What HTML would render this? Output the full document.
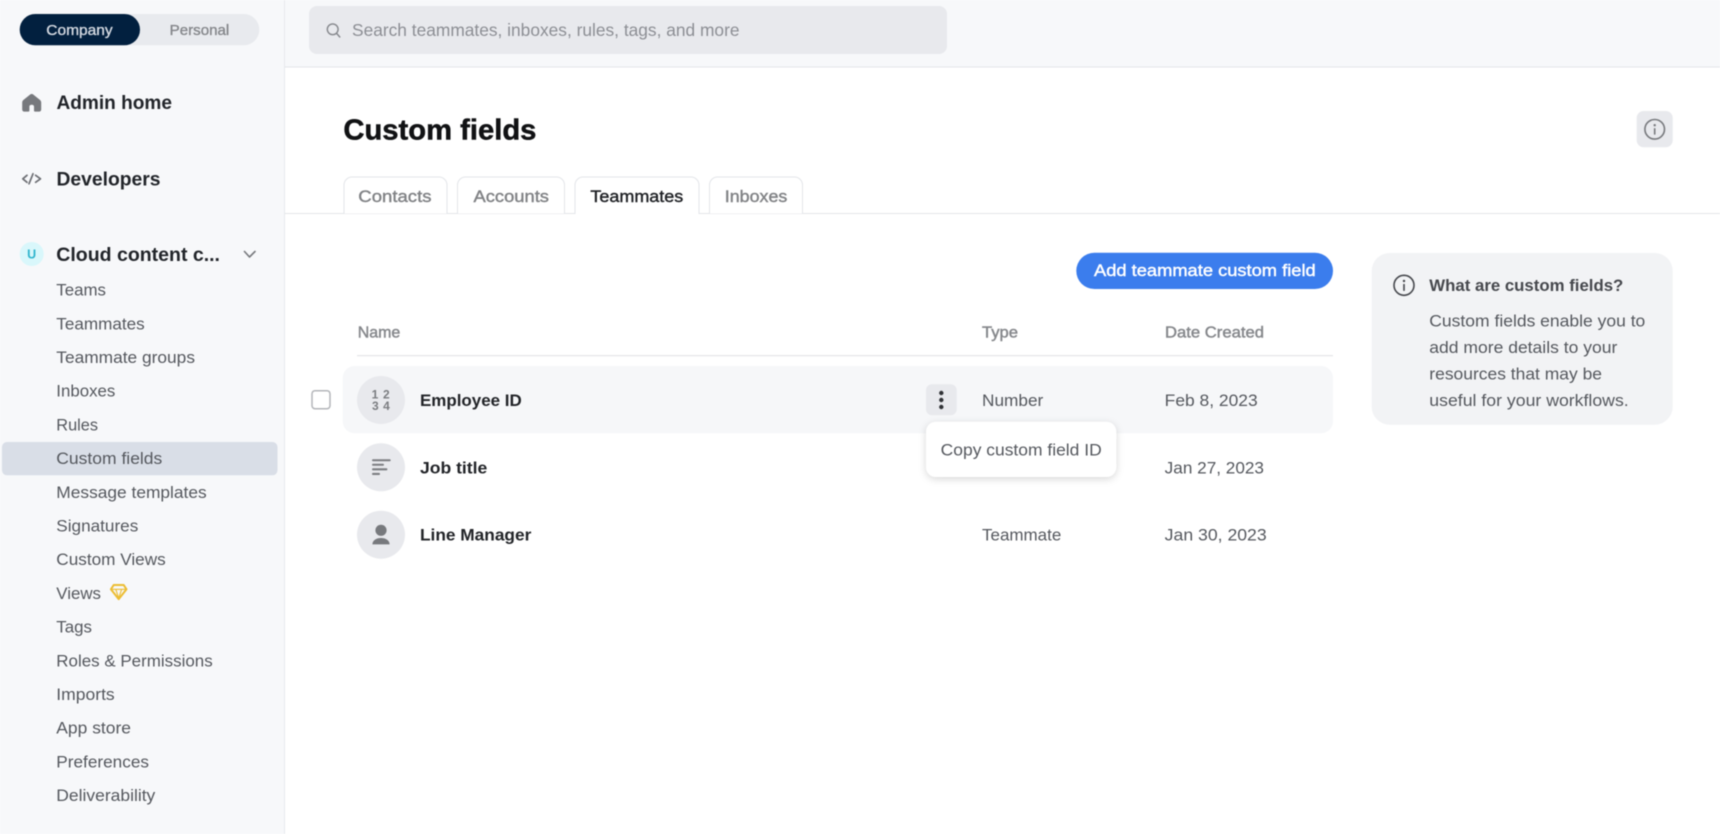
<!DOCTYPE html>
<html lang="en">
<head>
<meta charset="utf-8">
<title>Custom fields</title>
<style>
html,body{margin:0;padding:0;width:1720px;height:834px;overflow:hidden;background:#fff}
svg{display:block;filter:blur(.45px)}
text{font-family:"Liberation Sans",sans-serif;white-space:pre}
.n{font-size:17px;fill:#55585e}
.h{font-size:19.5px;font-weight:700;fill:#22252a}
.tab{font-size:17px;fill:#808285;stroke:#808285;stroke-width:.4px}
.th{font-size:16px;fill:#85878b;stroke:#85878b;stroke-width:.45px}
.nm{font-size:17px;font-weight:700;fill:#222428}
.td{font-size:17px;fill:#55585e}
</style>
</head>
<body>
<svg width="1720" height="834" viewBox="0 0 1720 834" xmlns="http://www.w3.org/2000/svg">
<defs>
<filter id="sh" x="-20%" y="-40%" width="140%" height="190%"><feDropShadow dx="0" dy="2" stdDeviation="4" flood-color="#000" flood-opacity=".16"/></filter>
</defs>
<rect width="1720" height="834" fill="#fff"/>
<!-- sidebar -->
<rect width="284" height="834" fill="#f7f8fa"/>
<rect x="284" width="1" height="834" fill="#e7e9ed"/>
<!-- top bar -->
<rect x="285" width="1435" height="66.5" fill="#f7f8fa"/>
<rect x="285" y="66.5" width="1435" height="1" fill="#e3e5e9"/>
<rect x="309" y="6" width="638" height="48" rx="8" fill="#e8e9ed"/>
<g fill="none" stroke="#85878c" stroke-width="1.4" stroke-linecap="round"><circle cx="332.7" cy="29.3" r="5.4"/><path d="M336.6 33.4l3.2 3.6"/></g>
<text x="352" y="36" font-size="17.5" fill="#8c8e94" textLength="387.5" lengthAdjust="spacingAndGlyphs">Search teammates, inboxes, rules, tags, and more</text>

<!-- toggle -->
<rect x="19.7" y="14" width="239.6" height="31.3" rx="15.6" fill="#e8eaee"/>
<rect x="19.7" y="14" width="120.3" height="31.3" rx="15.6" fill="#02203f"/>
<text x="46.3" y="35" font-size="15" fill="#d5dae2" stroke="#d5dae2" stroke-width=".35" textLength="66.4" lengthAdjust="spacingAndGlyphs">Company</text>
<text x="169.7" y="35" font-size="15" fill="#85878b" stroke="#85878b" stroke-width=".35" textLength="59.6" lengthAdjust="spacingAndGlyphs">Personal</text>

<!-- main nav -->
<path d="M31.7 94c-.7 0-1.2.2-1.8.7l-6.4 5.2c-.9.7-1.3 1.7-1.3 2.8v6.8c0 1.2.9 2.1 2 2.1h4.2c.6 0 1-.4 1-1v-4.2c0-.9.9-1.6 2.3-1.6s2.3.7 2.3 1.6v4.2c0 .6.4 1 1 1h4.2c1.1 0 2-.9 2-2.1v-6.8c0-1.1-.4-2.1-1.3-2.8l-6.4-5.2c-.6-.5-1.1-.7-1.8-.7z" fill="#77797d"/>
<text x="56.5" y="109" class="h" textLength="115.5" lengthAdjust="spacingAndGlyphs">Admin home</text>
<g fill="none" stroke="#6d6f74" stroke-width="1.7" stroke-linecap="round" stroke-linejoin="round"><path d="M27 175.3l-4.2 3.5 4.2 3.5"/><path d="M35.6 175.3l4.9 3.5-4.9 3.5"/><path d="M33 173.8l-4 10"/></g>
<text x="56.5" y="185.3" class="h" textLength="104" lengthAdjust="spacingAndGlyphs">Developers</text>
<circle cx="31.7" cy="254" r="12" fill="#d9f7fb"/>
<text x="31.7" y="258.6" font-size="12.5" font-weight="700" fill="#2fb4cd" text-anchor="middle">U</text>
<text x="56.3" y="261" class="h" textLength="163.7" lengthAdjust="spacingAndGlyphs">Cloud content c...</text>
<path d="M244.5 251.5l5 5.5 5.5-5.5" fill="none" stroke="#77797d" stroke-width="1.6" stroke-linecap="round" stroke-linejoin="round"/>

<!-- sub nav -->
<rect x="2" y="442" width="275.5" height="33.3" rx="5" fill="#d9dee7"/>
<text class="n" x="56.3" y="295.6" textLength="49.7" lengthAdjust="spacingAndGlyphs">Teams</text>
<text class="n" x="56.3" y="329.3" textLength="88.4" lengthAdjust="spacingAndGlyphs">Teammates</text>
<text class="n" x="56.3" y="363" textLength="138.7" lengthAdjust="spacingAndGlyphs">Teammate groups</text>
<text class="n" x="56.3" y="396.7" textLength="59" lengthAdjust="spacingAndGlyphs">Inboxes</text>
<text class="n" x="56.3" y="430.4" textLength="41.7" lengthAdjust="spacingAndGlyphs">Rules</text>
<text class="n" x="56.3" y="464.1" textLength="106" lengthAdjust="spacingAndGlyphs">Custom fields</text>
<text class="n" x="56.3" y="497.8" textLength="150.4" lengthAdjust="spacingAndGlyphs">Message templates</text>
<text class="n" x="56.3" y="531.5" textLength="82" lengthAdjust="spacingAndGlyphs">Signatures</text>
<text class="n" x="56.3" y="565.2" textLength="109.4" lengthAdjust="spacingAndGlyphs">Custom Views</text>
<text class="n" x="56.3" y="598.9" textLength="44.7" lengthAdjust="spacingAndGlyphs">Views</text>
<g fill="none" stroke="#ecbd33" stroke-linejoin="round"><path d="M113.7 585h10l2.8 4.3-7.8 9.8-7.8-9.8z" stroke-width="2"/><path d="M111 589.3h15.4M115.8 589.3l2.9 9 2.9-9" stroke-width="1.1"/></g>
<text class="n" x="56.3" y="632.6" textLength="35.7" lengthAdjust="spacingAndGlyphs">Tags</text>
<text class="n" x="56.3" y="666.3" textLength="156.4" lengthAdjust="spacingAndGlyphs">Roles &amp; Permissions</text>
<text class="n" x="56.3" y="700" textLength="58.4" lengthAdjust="spacingAndGlyphs">Imports</text>
<text class="n" x="56.3" y="733.7" textLength="74.7" lengthAdjust="spacingAndGlyphs">App store</text>
<text class="n" x="56.3" y="767.4" textLength="92.7" lengthAdjust="spacingAndGlyphs">Preferences</text>
<text class="n" x="56.3" y="801.1" textLength="99" lengthAdjust="spacingAndGlyphs">Deliverability</text>

<!-- heading -->
<text x="343.4" y="139.5" font-size="29" font-weight="700" fill="#111214" stroke="#111214" stroke-width=".5" textLength="193" lengthAdjust="spacingAndGlyphs">Custom fields</text>
<rect x="1636.7" y="111" width="36" height="36.3" rx="7" fill="#e8e9ed"/>
<g fill="none" stroke="#77797d" stroke-width="1.6"><circle cx="1654.7" cy="129.3" r="9.8"/><path d="M1654.7 128.8v5.2" stroke-linecap="round"/></g>
<circle cx="1654.7" cy="125.2" r="1.2" fill="#77797d"/>

<!-- tabs -->
<rect x="285" y="213" width="1435" height="1" fill="#e3e5e9"/>
<g fill="#fff" stroke="#e3e5e9" stroke-width="1">
<path d="M344 213.5V185a8 8 0 0 1 8-8h87a8 8 0 0 1 8 8v28.5"/>
<path d="M457.5 213.5V185a8 8 0 0 1 8-8h91a8 8 0 0 1 8 8v28.5"/>
<path d="M575 214V185a8 8 0 0 1 8-8h108a8 8 0 0 1 8 8v29"/>
<path d="M709.5 213.5V185a8 8 0 0 1 8-8h77a8 8 0 0 1 8 8v28.5"/>
</g>
<rect x="575.5" y="212.5" width="123" height="2" fill="#fff"/>
<text class="tab" x="358.3" y="202" textLength="73.2" lengthAdjust="spacingAndGlyphs">Contacts</text>
<text class="tab" x="473.5" y="202" textLength="75.5" lengthAdjust="spacingAndGlyphs">Accounts</text>
<text class="tab" x="590.4" y="202" textLength="92.9" lengthAdjust="spacingAndGlyphs" style="fill:#1e2024;stroke:#1e2024">Teammates</text>
<text class="tab" x="724.8" y="202" textLength="62.5" lengthAdjust="spacingAndGlyphs">Inboxes</text>

<!-- button -->
<rect x="1076.3" y="252.7" width="256.7" height="36.3" rx="18.1" fill="#3b7ded"/>
<text x="1094" y="276" font-size="17" fill="#fff" stroke="#fff" stroke-width=".45" textLength="221.7" lengthAdjust="spacingAndGlyphs">Add teammate custom field</text>

<!-- table header -->
<text class="th" x="357.7" y="337.7" textLength="42.6" lengthAdjust="spacingAndGlyphs">Name</text>
<text class="th" x="982" y="337.7" textLength="36" lengthAdjust="spacingAndGlyphs">Type</text>
<text class="th" x="1165" y="337.7" textLength="99" lengthAdjust="spacingAndGlyphs">Date Created</text>
<rect x="357" y="355" width="976" height="1.3" fill="#e6e7ea"/>

<!-- row 1 -->
<rect x="342.7" y="366" width="990.3" height="67.3" rx="12" fill="#f6f7f9"/>
<rect x="312" y="390.7" width="18" height="18" rx="3" fill="#fff" stroke="#b4b6ba" stroke-width="1.5"/>
<circle cx="381" cy="400" r="24" fill="#e8e9ed"/>
<g font-size="12" font-weight="700" fill="#7b7d81" text-anchor="middle"><text x="375" y="398.3">1</text><text x="386.3" y="398.3">2</text><text x="375.3" y="410">3</text><text x="386.5" y="410">4</text></g>
<text class="nm" x="420" y="406" textLength="101.7" lengthAdjust="spacingAndGlyphs">Employee ID</text>
<rect x="926" y="384.3" width="30.7" height="31" rx="6" fill="#e8e9ed"/>
<g fill="#303236"><circle cx="941.3" cy="393" r="2.2"/><circle cx="941.3" cy="400" r="2.2"/><circle cx="941.3" cy="407" r="2.2"/></g>
<text class="td" x="982" y="406" textLength="61.3" lengthAdjust="spacingAndGlyphs">Number</text>
<text class="td" x="1164.7" y="406" textLength="93" lengthAdjust="spacingAndGlyphs">Feb 8, 2023</text>

<!-- row 2 -->
<circle cx="381" cy="467.3" r="24" fill="#e8e9ed"/>
<g fill="#7b7d81"><rect x="372" y="459.2" width="18.7" height="2.1" rx="1"/><rect x="372" y="463.7" width="12" height="2.1" rx="1"/><rect x="372" y="468.3" width="15.4" height="2.1" rx="1"/><rect x="372" y="472.9" width="8" height="2.1" rx="1"/></g>
<text class="nm" x="420" y="473.3" textLength="67.3" lengthAdjust="spacingAndGlyphs">Job title</text>
<text class="td" x="1164.7" y="473.3" textLength="99.3" lengthAdjust="spacingAndGlyphs">Jan 27, 2023</text>

<!-- row 3 -->
<circle cx="381" cy="534.7" r="24" fill="#e8e9ed"/>
<g fill="#77797d"><circle cx="381" cy="530.3" r="5.6"/><path d="M372.4 544.4c0-4 3.8-6.4 8.6-6.4s8.6 2.4 8.6 6.4z"/></g>
<text class="nm" x="420" y="540.7" textLength="111.3" lengthAdjust="spacingAndGlyphs">Line Manager</text>
<text class="td" x="982" y="540.7" textLength="79.3" lengthAdjust="spacingAndGlyphs">Teammate</text>
<text class="td" x="1164.7" y="540.7" textLength="102" lengthAdjust="spacingAndGlyphs">Jan 30, 2023</text>

<!-- popup -->
<rect x="926" y="421.7" width="190.3" height="55.3" rx="10" fill="#fff" filter="url(#sh)"/>
<text class="td" x="940.7" y="455.7" textLength="161" lengthAdjust="spacingAndGlyphs">Copy custom field ID</text>

<!-- info card -->
<rect x="1371.7" y="253" width="301" height="171.7" rx="18" fill="#f2f3f5"/>
<g fill="none" stroke="#46484d" stroke-width="1.6"><circle cx="1404" cy="285.3" r="10"/><path d="M1404 284.6v5.6" stroke-linecap="round"/></g>
<circle cx="1404" cy="281" r="1.2" fill="#46484d"/>
<text x="1429.3" y="291" font-size="16.5" font-weight="700" fill="#46484d" textLength="194" lengthAdjust="spacingAndGlyphs">What are custom fields?</text>
<text class="td" x="1429.3" y="326.3" textLength="216" lengthAdjust="spacingAndGlyphs">Custom fields enable you to</text>
<text class="td" x="1429.3" y="353" textLength="188" lengthAdjust="spacingAndGlyphs">add more details to your</text>
<text class="td" x="1429.3" y="379.3" textLength="172.7" lengthAdjust="spacingAndGlyphs">resources that may be</text>
<text class="td" x="1429.3" y="406" textLength="199.4" lengthAdjust="spacingAndGlyphs">useful for your workflows.</text>
</svg>
</body>
</html>
